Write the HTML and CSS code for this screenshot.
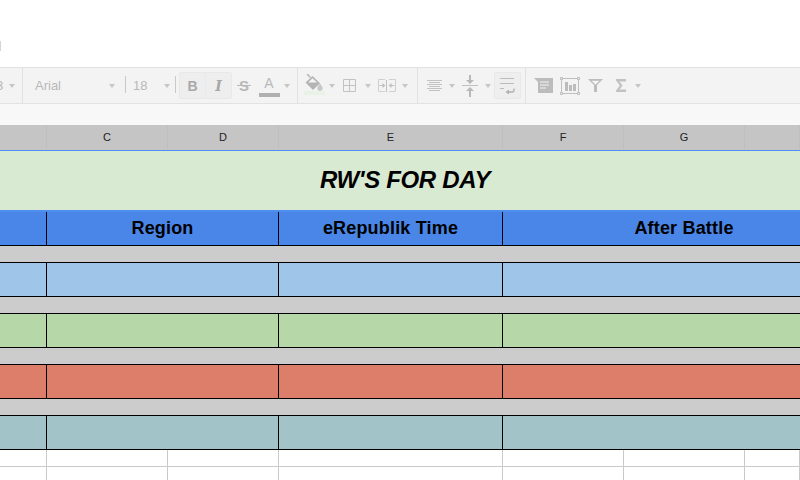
FILE: index.html
```html
<!DOCTYPE html>
<html lang="en">
<head>
    <meta charset="UTF-8">
    <meta name="viewport" content="width=device-width, initial-scale=1.0">
    <title>RW's for day</title>
    <link rel="stylesheet" href="styles.css">
</head>
<body>
    <div class="title-area"><div class="title-mark"></div></div>

    <div class="toolbar">
        <div class="tb-group tb-zoom">
            <span class="tb-cut">3</span>
            <span class="caret"></span>
        </div>
        <div class="tb-select tb-font">
            <span>Arial</span>
            <span class="caret"></span>
        </div>
        <div class="tb-sep"></div>
        <div class="tb-select tb-size">
            <span>18</span>
            <span class="caret"></span>
        </div>
        <div class="tb-sep"></div>
        <div class="tb-group tb-format">
            <div class="tb-btn tb-bold">B</div>
            <div class="tb-btn tb-italic">I</div>
            <div class="slot slot-s"><span class="tb-strike">S</span></div>
            <div class="slot slot-a">
                <span class="tb-color">A</span>
            </div>
            <span class="caret"></span>
        </div>
        <div class="tb-group tb-cells">
            <div class="slot">
                <svg class="fill-icon" width="18" height="17" viewBox="0 0 18 17">
                    <path d="M2 0l3.5 3.5" stroke="#b6b6b6" stroke-width="1.5" fill="none"/>
                    <path d="M7.5 2L15 9.2 8 16 .5 8.5z" fill="#b4b4b4"/>
                    <path d="M7.5 4.2l4.6 4.4H3.2z" fill="#f3f3f3"/>
                    <path d="M15 9.5c1.3 2 2.6 3.2 2.6 4.7a2.6 2.6 0 0 1-5.2 0c0-1.5 1.3-2.7 2.6-4.7z" fill="#c8c8c8"/>
                </svg>
                <span class="fill-bar"></span>
            </div>
            <span class="caret"></span>
            <div class="slot">
                <svg width="14" height="14" viewBox="0 0 14 14">
                    <path d="M.5.5h12v12H.5zM6.5.5v12M.5 6.5h12" stroke="#c2c2c2" fill="none"/>
                </svg>
            </div>
            <span class="caret"></span>
            <div class="slot slot-merge">
                <svg width="18" height="14" viewBox="0 0 18 14">
                    <path d="M7 .5H.5v12H7M11 .5h6.5v12H11" stroke="#d0d0d0" fill="none"/>
                    <path d="M1.5 6.5h4M16.5 6.5h-4M8.5 1v12" stroke="#c0c0c0" fill="none"/>
                    <path d="M4.5 4l3 2.5-3 2.5zM13.5 4l-3 2.5 3 2.5z" fill="#c0c0c0"/>
                </svg>
            </div>
            <span class="caret"></span>
        </div>
        <div class="tb-group tb-align">
            <div class="slot">
                <svg width="15" height="12" viewBox="0 0 15 12">
                    <path d="M0 .5h15M2 2.5h11M0 4.5h15M2 6.5h11M0 8.5h15M2 10.5h11" stroke="#c2c2c2" fill="none"/>
                </svg>
            </div>
            <span class="caret"></span>
            <div class="slot">
                <svg width="16" height="22" viewBox="0 0 16 22">
                    <path d="M0 10.5h16" stroke="#c0c0c0" fill="none"/>
                    <path d="M7 0h2v5h3l-4 4-4-4h3zM8 12l4 4H9v6H7v-6H4z" fill="#b8b8b8"/>
                </svg>
            </div>
            <span class="caret"></span>
            <div class="tb-btn tb-wrap">
                <svg width="15" height="16" viewBox="0 0 15 16">
                    <path d="M0 .5h14M0 5.5h14M0 10.5h4" stroke="#bcbcbc" fill="none"/>
                    <path d="M14 10.5v1.5a2 2 0 0 1-2 2H8" stroke="#b0b0b0" stroke-width="1.3" fill="none"/>
                    <path d="M9 11.5v5l-3.5-2.5z" fill="#b0b0b0"/>
                </svg>
            </div>
        </div>
        <div class="tb-group tb-misc">
            <div class="slot slot-wide">
                <svg width="19" height="15" viewBox="0 0 19 15">
                    <path d="M0 0h19v15H4V4z" fill="#bcbcbc"/>
                    <path d="M6 4h9M6 7h9M6 10h6" stroke="#f3f3f3" fill="none"/>
                </svg>
            </div>
            <div class="slot slot-wide">
                <svg width="20" height="18" viewBox="0 0 20 18">
                    <path d="M1.5 1.5h17v15h-17z" stroke="#c0c0c0" fill="none"/>
                    <path d="M.5.5h2v2h-2zM17.5.5h2v2h-2zM.5 15.5h2v2h-2zM17.5 15.5h2v2h-2z" fill="#f3f3f3" stroke="#bcbcbc"/>
                    <path d="M5 5h3v9H5zM9 8h3v6H9zM13 7h3v7h-3z" fill="#bcbcbc"/>
                </svg>
            </div>
            <div class="slot slot-wide">
                <svg width="15" height="13" viewBox="0 0 15 13">
                    <path d="M0 0h15L9 6v7H6V6zM3.5 1.8l4 4 4-4z" fill="#bcbcbc" fill-rule="evenodd"/>
                </svg>
            </div>
            <div class="slot slot-sum">
                <svg width="10" height="13" viewBox="0 0 10 13">
                    <path d="M0 0h10v2.4H3.6l3 4.1-3 4.1H10V13H0v-1.6l3.8-4.9L0 1.6z" fill="#c2c2c2"/>
                </svg>
            </div>
            <span class="caret"></span>
        </div>
    </div>

    <div class="formula-bar"></div>

    <div class="col-headers">
        <div class="col-head"></div>
        <div class="col-head">C</div>
        <div class="col-head">D</div>
        <div class="col-head">E</div>
        <div class="col-head">F</div>
        <div class="col-head">G</div>
        <div class="col-head"></div>
    </div>

    <div class="sheet-title">RW'S FOR DAY</div>

    <div class="table-head">
        <div class="cell"></div>
        <div class="cell">Region</div>
        <div class="cell">eRepublik Time</div>
        <div class="cell">After Battle</div>
    </div>

    <div class="spacer"></div>
    <div class="band band-blue">
        <div class="cell"></div><div class="cell"></div><div class="cell"></div><div class="cell"></div>
    </div>
    <div class="spacer"></div>
    <div class="band band-green">
        <div class="cell"></div><div class="cell"></div><div class="cell"></div><div class="cell"></div>
    </div>
    <div class="spacer"></div>
    <div class="band band-red">
        <div class="cell"></div><div class="cell"></div><div class="cell"></div><div class="cell"></div>
    </div>
    <div class="spacer"></div>
    <div class="band band-teal">
        <div class="cell"></div><div class="cell"></div><div class="cell"></div><div class="cell"></div>
    </div>

    <div class="empty-row">
        <div></div><div></div><div></div><div></div><div></div><div></div><div></div>
    </div>
    <div class="empty-row">
        <div></div><div></div><div></div><div></div><div></div><div></div><div></div>
    </div>
</body>
</html>
```

FILE: styles.css
```css
html, body {
    height: 480px;
    overflow: hidden;
}
body {
    margin: 0;
    width: 800px;
    background: #fff;
    font-family: "Liberation Sans", Arial, sans-serif;
}

/* top of the app */
.title-area {
    height: 26px;
    padding-top: 41px;
}
.title-mark {
    width: 1px;
    height: 10px;
    background: #d4d4de;
}

/* toolbar */
.toolbar {
    display: flex;
    height: 35px;
    background: #f3f3f3;
    border-top: 1px solid #e2e2e2;
    border-bottom: 1px solid #e2e2e2;
    color: #b8b8b8;
    font-size: 13px;
}
.tb-group {
    display: flex;
    align-items: center;
    gap: 1px;
    box-sizing: border-box;
    border-right: 1px solid #e2e2e2;
}
.tb-zoom {
    width: 23px;
    gap: 4px;
}
.tb-cut {
    margin-left: -4px;
}
.tb-select {
    display: flex;
    align-items: center;
    justify-content: space-between;
    box-sizing: border-box;
}
.tb-font {
    width: 102px;
    padding: 0 8px 0 12px;
}
.tb-size {
    width: 49px;
    padding: 0 3px 0 7px;
}
.tb-sep {
    width: 1px;
    height: 17px;
    margin-top: 8px;
    background: #c8c8c8;
}
.caret {
    width: 0;
    height: 0;
    margin: 1px 2px 0;
    border-left: 3px solid transparent;
    border-right: 3px solid transparent;
    border-top: 4px solid #c6c6c6;
}
.tb-btn {
    display: flex;
    align-items: center;
    justify-content: center;
    box-sizing: border-box;
    width: 27px;
    height: 27px;
    background: #eeeeee;
    border: 1px solid #e8e8e8;
    border-radius: 2px;
    color: #a8a8a8;
}
.slot {
    display: flex;
    flex-direction: column;
    align-items: center;
    justify-content: center;
    width: 24px;
    height: 27px;
    flex: none;
}
.tb-format {
    width: 122px;
    padding-left: 3px;
    gap: 0;
}
.tb-bold {
    font-size: 14px;
    font-weight: bold;
}
.tb-italic {
    margin-left: -1px;
    font-family: "DejaVu Serif", serif;
    font-size: 14px;
    font-weight: bold;
    font-style: italic;
}
.tb-strike {
    padding: 0 2px;
    background: linear-gradient(#b8b8b8, #b8b8b8) center / 100% 1px no-repeat;
    font-size: 15px;
    font-weight: bold;
}
.slot-a {
    width: 26px;
}
.tb-color {
    width: 21px;
    height: 15px;
    margin-top: 2px;
    padding-bottom: 1px;
    border-bottom: 4px solid #b0b0b0;
    text-align: center;
    font-size: 14px;
    line-height: 13px;
}
.tb-cells {
    width: 120px;
    padding-left: 4px;
}
.fill-bar {
    width: 21px;
    height: 4px;
    margin-bottom: 3px;
    background: #e9f3e5;
}
.fill-icon {
    flex: none;
}
.slot-merge {
    width: 25px;
}
.tb-align {
    width: 108px;
    padding-left: 4px;
}
.tb-misc {
    flex: 1;
    padding-left: 5px;
    border-right: none;
}
.slot-wide {
    width: 25px;
}
.slot-sum {
    width: 23px;
}

.formula-bar {
    height: 21px;
    background: #f8f8f8;
}

/* column letters */
.col-headers {
    display: grid;
    grid-template-columns: 47px 121px 111px 224px 121px 121px 1fr;
    height: 25px;
    background: #c5c5c5;
    border-bottom: 1px solid #4d90fe;
}
.col-head {
    box-sizing: border-box;
    border-right: 1px solid #bfbfbf;
    color: #222;
    font-size: 11px;
    line-height: 25px;
    text-align: center;
}

/* sheet */
.sheet-title {
    height: 59px;
    padding-left: 10px;
    background: #d9ead3;
    color: #000;
    font-size: 24px;
    font-weight: bold;
    font-style: italic;
    letter-spacing: -0.33px;
    line-height: 58px;
    text-align: center;
}
.table-head, .band {
    display: grid;
    grid-template-columns: 47px 232px 224px 363px;
    width: 866px;
}
.cell {
    box-sizing: border-box;
    border-right: 1px solid #000;
}
.table-head {
    height: 33px;
    background: #4a86e8;
    border-top: 2px solid #4f8dee;
    border-bottom: 1px solid #000;
    color: #000;
    font-size: 18px;
    font-weight: bold;
    letter-spacing: 0.18px;
    line-height: 33px;
    text-align: center;
}
.spacer {
    height: 16px;
    background: #ccc;
}
.band {
    height: 33px;
    border-top: 1px solid #000;
    border-bottom: 1px solid #000;
}
.band-blue { background: #9fc5e8; }
.band-green { background: #b6d7a8; }
.band-red { background: #dd7e6b; }
.band-teal { background: #a2c4c9; }

.empty-row {
    display: grid;
    grid-template-columns: 47px 121px 111px 224px 121px 121px 1fr;
    height: 16px;
    border-bottom: 1px solid #c9c9c9;
}
.empty-row div {
    box-sizing: border-box;
    border-right: 1px solid #c9c9c9;
}
```
